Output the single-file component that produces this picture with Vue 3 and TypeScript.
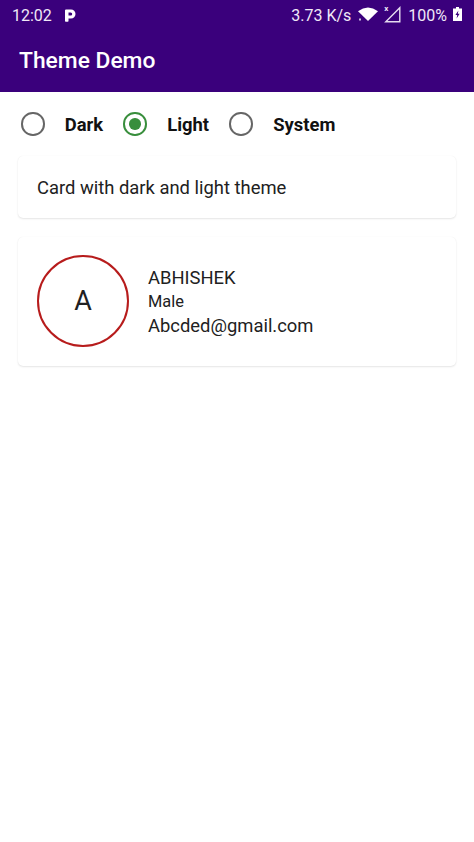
<script setup lang="ts">
const options = [
  { label: 'Dark', selected: false },
  { label: 'Light', selected: true },
  { label: 'System', selected: false },
]
</script>

<template>
  <div class="page">
    <header class="appbar">
      <div class="status">
        <span class="time">12:02</span>
        <svg class="p-icon" width="12" height="13" viewBox="0 0 12 13">
          <path fill="#fff" fill-rule="evenodd" d="M1 1.5Q1 .5 2 .5H7a4.5 4.5 0 0 1 0 9H4.5V12Q4.5 12.8 3.7 12.8H1.8Q1 12.8 1 12ZM4.5 3.5V6.5H6.7a1.5 1.5 0 0 0 0-3Z" />
        </svg>
        <span class="spacer"></span>
        <span class="speed">3.73 K/s</span>
        <svg class="wifi" width="22" height="14" viewBox="0 0 22 14">
          <path fill="#fff" d="M1 4.2Q11 -3 21 4.2L11 14Z" />
          <rect x="2" y="11.5" width="2" height="2" fill="#cbb8e0" />
        </svg>
        <span class="signal">
          <span class="x">x</span>
          <svg width="17" height="17" viewBox="0 0 17 17">
            <path fill="none" stroke="#e6dcf0" stroke-width="1.4" d="M15.8 1.8V15.8H1.8Z" />
          </svg>
        </span>
        <span class="battery-text">100%</span>
        <svg class="battery" width="9" height="14" viewBox="0 0 9 14">
          <path fill="#fff" fill-rule="evenodd" d="M3 0H6V1.4H9V14H0V1.4H3ZM5.4 3.4 2.4 8H4.2L3.6 11.6 6.6 6.8H4.8Z" />
        </svg>
      </div>
      <div class="title">Theme Demo</div>
    </header>

    <main class="content">
      <div class="radios">
        <div v-for="o in options" :key="o.label" class="radio-item">
          <span class="radio" :class="{ on: o.selected }"></span>
          <span class="radio-label">{{ o.label }}</span>
        </div>
      </div>

      <section class="card simple">Card with dark and light theme</section>

      <section class="card profile">
        <div class="avatar">A</div>
        <div class="info">
          <div class="line">ABHISHEK</div>
          <div class="line small">Male</div>
          <div class="line">Abcded@gmail.com</div>
        </div>
      </section>
    </main>
  </div>
</template>

<style>
html, body { margin: 0; background: #fff; }
</style>

<style scoped>
.page {
  width: 474px;
  height: 842px;
  overflow: hidden;
  background: #fff;
  font-family: Roboto, "Liberation Sans", sans-serif;
  color: #212121;
}
.appbar {
  height: 92px;
  background: #3a007c;
  color: #fff;
}
.status {
  height: 30px;
  display: flex;
  align-items: center;
  padding: 0 12px 0 12px;
  font-size: 16px;
  color: #f0e8f7;
}
.p-icon { margin-left: 12px; }
.spacer { flex: 1; }
.speed { margin-right: 6px; }
.wifi { margin-right: 5px; margin-bottom: 2px; }
.signal { position: relative; display: flex; margin-right: 7px; margin-bottom: 2px; }
.x { position: absolute; left: 0; top: -2px; font-size: 8px; font-weight: 700; }
.battery-text { margin-right: 6px; }
.battery { margin-bottom: 2px; }
.title {
  padding: 6px 0 0 19px;
  font-size: 22.8px;
  font-weight: 500;
  line-height: 50px;
}
.content {
  padding: 0 18px;
}
.radios {
  height: 64px;
  display: flex;
  align-items: center;
  padding-left: 3px;
  gap: 20.3px;
}
.radio-item {
  display: flex;
  align-items: center;
  gap: 20.3px;
}
.radio {
  box-sizing: border-box;
  width: 23.5px;
  height: 23.5px;
  border: 2px solid #666;
  border-radius: 50%;
  display: flex;
  align-items: center;
  justify-content: center;
}
.radio.on { border-color: #388e3c; }
.radio.on::after {
  content: "";
  width: 11.5px;
  height: 11.5px;
  border-radius: 50%;
  background: #388e3c;
}
.radio-label {
  font-size: 18.4px;
  font-weight: 700;
  color: #111;
}
.card {
  box-sizing: border-box;
  border-radius: 5px;
  background: #fff;
  box-shadow: 0 1px 2px rgba(0, 0, 0, 0.1), 0 0 1px rgba(0, 0, 0, 0.06);
}
.simple {
  height: 62px;
  display: flex;
  align-items: center;
  padding-left: 19px;
  font-size: 18.4px;
}
.profile {
  height: 129px;
  margin-top: 19px;
  display: flex;
  align-items: center;
  padding: 0 0 1px 19px;
  gap: 18px;
}
.avatar {
  box-sizing: border-box;
  width: 92px;
  height: 92px;
  border: 2px solid #b71c1c;
  border-radius: 50%;
  display: flex;
  align-items: center;
  justify-content: center;
  font-size: 27px;
}
.info { display: flex; flex-direction: column; margin: 2px 0 0 1px; }
.line { font-size: 18.4px; line-height: 24px; }
.line.small { font-size: 16.4px; }
</style>
